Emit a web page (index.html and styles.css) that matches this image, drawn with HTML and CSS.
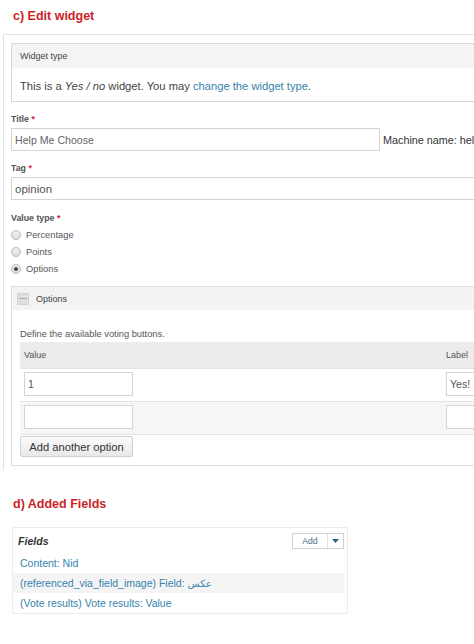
FILE: index.html
```html
<!DOCTYPE html>
<html lang="en">
<head>
<meta charset="utf-8">
<title>Edit widget</title>
<link rel="stylesheet" href="styles.css">
</head>
<body>
<div class="page">
  <h2 class="step step-c">c) Edit widget</h2>
  <div class="panel">
    <div class="box">
      <div class="box-head">Widget type</div>
      <div class="box-body">This is a <em>Yes / no</em> widget. You may <a href="#" class="link">change the widget type</a>.</div>
    </div>

    <label class="lbl">Title <span class="req">*</span></label>
    <div class="title-row">
      <input class="text title-input" type="text" value="Help Me Choose">
      <span class="machine">Machine name: help_me_choose</span>
    </div>

    <label class="lbl">Tag <span class="req">*</span></label>
    <input class="text tag-input" type="text" value="opinion">

    <label class="lbl lbl-vt">Value type <span class="req">*</span></label>
    <div class="radios">
      <div class="radio"><span class="dot"></span>Percentage</div>
      <div class="radio"><span class="dot"></span>Points</div>
      <div class="radio"><span class="dot checked"></span>Options</div>
    </div>

    <div class="fs">
      <div class="fs-head"><span class="toggle"></span>Options</div>
      <div class="fs-body">
        <p class="desc">Define the available voting buttons.</p>
        <table class="opts">
          <thead>
            <tr><th class="col-value">Value</th><th class="col-label">Label</th></tr>
          </thead>
          <tbody>
            <tr><td><input class="text cell-input" type="text" value="1"></td><td><input class="text label-input" type="text" value="Yes!"></td></tr>
            <tr class="even"><td><input class="text cell-input" type="text" value=""></td><td><input class="text label-input" type="text" value=""></td></tr>
          </tbody>
        </table>
        <button class="btn" type="button">Add another option</button>
      </div>
    </div>
  </div>

  <h2 class="step step-d">d) Added Fields</h2>
  <div class="fields">
    <div class="fields-head">
      <span class="fields-title">Fields</span>
      <span class="add-btn"><span class="add-label">Add</span><span class="add-arrow"><svg width="7" height="4" viewBox="0 0 7 4"><path d="M0 0H7L3.5 4Z" fill="#2f6383"/></svg></span></span>
    </div>
    <div class="fields-list">
      <div class="frow"><a href="#" class="link">Content: Nid</a></div>
      <div class="frow alt"><a href="#" class="link">(referenced_via_field_image) Field: <span class="ar">عکس</span></a></div>
      <div class="frow"><a href="#" class="link">(Vote results) Vote results: Value</a></div>
    </div>
  </div>
</div>
</body>
</html>
```
FILE: styles.css
```css
html, body {
  margin: 0;
  padding: 0;
  overflow: hidden;
  background: #fff;
}
body {
  width: 474px;
  height: 644px;
  font-family: "Liberation Sans", Arial, sans-serif;
  color: #444;
}
.page {
  width: 640px;
  padding: 8px 0 0 3px;
}
.step {
  margin: 0 0 0 10px;
  font-size: 12.5px;
  line-height: 16px;
  font-weight: bold;
  color: #cc1f26;
}
.step-d {
  margin-top: 26px;
}
.link {
  color: #3583ad;
  text-decoration: none;
}
.panel {
  margin-top: 10px;
  border-top: 1px solid #e2e2e2;
  border-left: 1px solid #e2e2e2;
  padding: 8px 0 4px 7px;
}
.box {
  border: 1px solid #d6d6d6;
}
.box-head {
  height: 24px;
  line-height: 24px;
  padding-left: 8px;
  background: #f4f4f4;
  font-size: 9px;
  color: #444;
}
.box-body {
  padding: 10px 8px 7px;
  line-height: 16px;
  font-size: 11.2px;
  color: #444;
}
.lbl {
  display: block;
  margin: 11px 0 3px;
  font-size: 8.8px;
  line-height: 12px;
  font-weight: bold;
  color: #555;
}
.lbl-vt {
  margin: 12px 0 2px;
}
.req {
  color: #e0202a;
}
.text {
  display: block;
  box-sizing: border-box;
  height: 23px;
  margin: 0;
  padding: 0 3px;
  border: 1px solid #d4d4d4;
  border-radius: 0;
  background: #fff;
  font-family: "Liberation Sans", Arial, sans-serif;
  font-size: 10.6px;
  color: #666;
  outline: none;
}
.title-row {
  display: flex;
  align-items: center;
  gap: 3px;
  white-space: nowrap;
}
.title-input {
  width: 369px;
  flex: none;
}
.machine {
  font-size: 10.8px;
  color: #333;
}
.tag-input {
  width: 100%;
  font-size: 11.5px;
  color: #555;
}
.radios {
  display: flex;
  flex-direction: column;
}
.radio {
  display: flex;
  align-items: center;
  gap: 5px;
  height: 17px;
  font-size: 9.3px;
  color: #555;
}
.dot {
  box-sizing: border-box;
  width: 10px;
  height: 10px;
  border: 1px solid #b8b8b8;
  border-radius: 50%;
  background: linear-gradient(#f2f2f2, #dcdcdc);
  display: flex;
  align-items: center;
  justify-content: center;
}
.dot.checked::after {
  content: "";
  width: 4px;
  height: 4px;
  border-radius: 50%;
  background: #444;
}
.fs {
  margin-top: 9px;
  border: 1px solid #dcdcdc;
  border-right: none;
}
.fs-head {
  height: 23px;
  display: flex;
  align-items: center;
  gap: 7px;
  padding-left: 5px;
  background: #f3f3f3;
  font-size: 9px;
  color: #444;
}
.toggle {
  box-sizing: border-box;
  width: 12px;
  height: 12px;
  background: #dedede;
  border: 1px solid #d2d2d2;
  display: flex;
  align-items: center;
  justify-content: center;
}
.toggle::after {
  content: "";
  width: 8px;
  height: 1px;
  background: #ababab;
}
.fs-body {
  padding: 17px 0 8px 8px;
}
.desc {
  margin: 0;
  font-size: 9.3px;
  line-height: 14px;
  color: #555;
}
.opts {
  margin-top: 1px;
  border-collapse: collapse;
}
.opts th {
  height: 26px;
  padding: 0 4px;
  text-align: left;
  font-weight: normal;
  font-size: 9px;
  color: #555;
  background: #ececec;
}
.col-value {
  width: 414px;
}
.col-label {
  width: 192px;
}
.opts td {
  padding: 3px 4px 5px;
  border-top: 1px solid #e3e3e3;
  border-bottom: 1px solid #e3e3e3;
  background: #fff;
}
.opts tr.even td {
  background: #f6f6f6;
}
.cell-input {
  width: 109px;
  height: 24px;
  color: #555;
}
.label-input {
  width: 150px;
  height: 24px;
  color: #555;
}
.btn {
  display: block;
  margin-top: 1px;
  width: 113px;
  height: 21px;
  padding: 0;
  border: 1px solid #cfcfcf;
  border-radius: 2px;
  background: linear-gradient(#fbfbfb, #e8e8e8);
  font-family: "Liberation Sans", Arial, sans-serif;
  font-size: 11.2px;
  color: #333;
}
.fields {
  box-sizing: border-box;
  width: 336px;
  margin: 15px 0 0 9px;
  border: 1px solid #ececec;
}
.fields-head {
  height: 25px;
  display: flex;
  align-items: center;
  justify-content: space-between;
  padding: 0 3px 0 5px;
}
.fields-title {
  font-size: 10.6px;
  font-style: italic;
  font-weight: bold;
  color: #333;
}
.add-btn {
  box-sizing: border-box;
  display: flex;
  align-items: stretch;
  height: 16px;
  border: 1px solid #d0d0d0;
  background: #fff;
}
.add-label {
  width: 34px;
  display: flex;
  align-items: center;
  justify-content: center;
  font-size: 8.6px;
  color: #4a7190;
  border-right: 1px solid #e2e2e2;
}
.add-arrow {
  width: 15px;
  display: flex;
  align-items: center;
  justify-content: center;
}
.fields-list {
  margin-right: 3px;
}
.frow {
  height: 20px;
  line-height: 20px;
  padding-left: 7px;
  font-size: 10.5px;
}
.frow.alt {
  background: #f4f4f4;
}
.ar {
  font-family: "DejaVu Sans", sans-serif;
  font-size: 10px;
}
```
